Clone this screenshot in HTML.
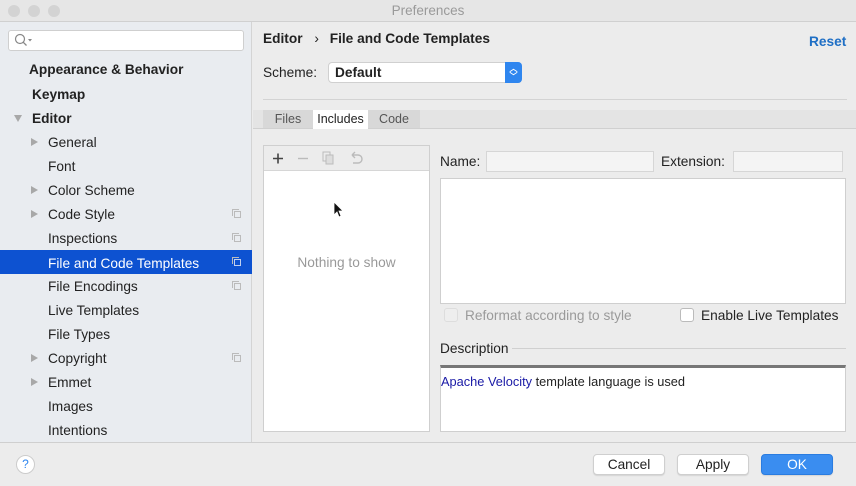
<!DOCTYPE html>
<html><head><style>
*{box-sizing:border-box;margin:0;padding:0}
body{width:856px;height:486px;overflow:hidden;font-family:"Liberation Sans",sans-serif;font-size:13.7px;color:#222;background:#ececec;position:relative}
.abs{position:absolute}
.tb{left:0;top:0;width:856px;height:22px;background:#e6e6e6;border-bottom:1px solid #d0d0d0;text-align:center;line-height:22px;color:#9a9a9a;font-size:13.5px}
.dot{top:5px;width:12px;height:12px;border-radius:6px;background:#d3d3d3}
.side{left:0;top:22px;width:252px;height:420px;background:#e9ecf0;border-right:1px solid #d4d4d4}
.row{position:absolute;left:0;width:252px;height:24px;line-height:25px}
.row span{position:absolute}
.arr{position:absolute;left:31px;top:8px;width:0;height:0;border-left:7px solid #a8a8a8;border-top:4px solid transparent;border-bottom:4px solid transparent}
.cp{position:absolute;left:234px;top:9px;width:7px;height:7px;border:1px solid #bbb;background:#e9ecf0}
.cp:before{content:"";position:absolute;left:-3px;top:-3px;width:6px;height:6px;border:1px solid #bbb;border-right:none;border-bottom:none}
.field{background:#f4f4f4;border:1px solid #d6d6d6}
.btn{top:454px;height:21px;width:72px;background:#fff;border:1px solid #cfcfcf;border-radius:4px;text-align:center;line-height:20px;font-size:13.7px;box-shadow:0 1px 1px rgba(0,0,0,.1)}
</style></head><body>
<div class="abs tb">Preferences</div>
<div class="abs dot" style="left:8px"></div><div class="abs dot" style="left:28px"></div><div class="abs dot" style="left:48px"></div>

<div class="abs side">
 <div class="abs" style="left:8px;top:8px;width:236px;height:21px;background:#fff;border:1px solid #cfcfcf;border-radius:3px">
  <svg width="22" height="19" style="position:absolute;left:3px;top:0"><circle cx="8" cy="8" r="4.5" fill="none" stroke="#888" stroke-width="1.2"/><line x1="11.2" y1="11.2" x2="14.5" y2="14.5" stroke="#888" stroke-width="1.3"/><path d="M16 8h4l-2 2.5z" fill="#888"/></svg>
 </div>
</div>
<div class="abs" style="left:0;top:22px;width:252px;height:420px">
 <div class="row" style="top:35px"><span style="left:29px;font-weight:bold">Appearance &amp; Behavior</span></div>
 <div class="row" style="top:60px"><span style="left:32px;font-weight:bold">Keymap</span></div>
 <div class="row" style="top:84px"><span style="left:14px;top:9px;width:0;height:0;border-top:7px solid #a8a8a8;border-left:4.5px solid transparent;border-right:4.5px solid transparent"></span><span style="left:32px;font-weight:bold">Editor</span></div>
 <div class="row" style="top:108px"><i class="arr"></i><span style="left:48px">General</span></div>
 <div class="row" style="top:132px"><span style="left:48px">Font</span></div>
 <div class="row" style="top:156px"><i class="arr"></i><span style="left:48px">Color Scheme</span></div>
 <div class="row" style="top:180px"><i class="arr"></i><span style="left:48px">Code Style</span><i class="cp"></i></div>
 <div class="row" style="top:204px"><span style="left:48px">Inspections</span><i class="cp"></i></div>
 <div class="row" style="top:228px;background:#0d52d1;color:#fff"><span style="left:48px;top:1px">File and Code Templates</span><i class="cp" style="background:#0d52d1;border-color:#c0d0f0"></i></div>
 <div class="row" style="top:252px"><span style="left:48px">File Encodings</span><i class="cp"></i></div>
 <div class="row" style="top:276px"><span style="left:48px">Live Templates</span></div>
 <div class="row" style="top:300px"><span style="left:48px">File Types</span></div>
 <div class="row" style="top:324px"><i class="arr"></i><span style="left:48px">Copyright</span><i class="cp"></i></div>
 <div class="row" style="top:348px"><i class="arr"></i><span style="left:48px">Emmet</span></div>
 <div class="row" style="top:372px"><span style="left:48px">Images</span></div>
 <div class="row" style="top:396px"><span style="left:48px">Intentions</span></div>
</div>

<div class="abs" style="left:263px;top:31px;font-weight:bold">Editor <span style="margin:0 7px 0 8px;font-weight:normal">›</span> File and Code Templates</div>
<div class="abs" style="left:809px;top:34px;color:#1f6fc5;font-weight:bold">Reset</div>
<div class="abs" style="left:263px;top:65px">Scheme:</div>
<div class="abs" style="left:328px;top:62px;width:194px;height:21px;background:#fff;border:1px solid #d0d0d0;border-radius:4px;font-weight:bold;line-height:20px;padding-left:6px">Default
 <div style="position:absolute;right:-1px;top:-1px;width:17px;height:21px;background:#2f86ef;border-radius:0 4px 4px 0;color:#fff;font-size:8px;line-height:8px;text-align:center;padding-top:3px">︿<br>﹀</div></div>
<div class="abs" style="left:263px;top:99px;width:584px;height:1px;background:#d3d3d3"></div>
<div class="abs" style="left:253px;top:110px;width:603px;height:19px;background:#e4e4e4;border-bottom:1px solid #d0d0d0"></div>
<div class="abs" style="left:263px;top:110px;width:50px;height:18px;background:#d8d8d8;text-align:center;line-height:19px;font-size:12.5px;color:#555">Files</div>
<div class="abs" style="left:313px;top:110px;width:55px;height:19px;background:#fff;text-align:center;line-height:19px;font-size:12.5px">Includes</div>
<div class="abs" style="left:368px;top:110px;width:52px;height:18px;background:#d8d8d8;text-align:center;line-height:19px;font-size:12.5px;color:#555">Code</div>

<div class="abs" style="left:263px;top:145px;width:167px;height:287px;background:#fff;border:1px solid #cfcfcf">
 <div style="height:25px;background:#ececec;border-bottom:1px solid #d6d6d6;position:relative">
  <svg width="110" height="25"><path d="M9 12.5h10M14 7.5v10" stroke="#444" stroke-width="1.6"/><path d="M34 12.5h10" stroke="#bbb" stroke-width="1.4"/><rect x="59" y="6" width="7" height="9" fill="none" stroke="#bbb"/><rect x="62" y="9" width="7" height="9" fill="#ddd" stroke="#bbb"/><path d="M88 9h6a4 4 0 0 1 0 8h-5M88 9l3-3M88 9l3 3" fill="none" stroke="#bbb" stroke-width="1.4"/></svg>
 </div>
 <div style="position:absolute;left:0;width:165px;top:109px;text-align:center;color:#999">Nothing to show</div>
 <svg style="position:absolute;left:69px;top:55px" width="12" height="18"><path d="M1 1v13l3-3 2 5 2-1-2-5h4z" fill="#111" stroke="#fff" stroke-width=".8"/></svg>
</div>

<div class="abs" style="left:440px;top:154px">Name:</div>
<div class="abs field" style="left:486px;top:151px;width:168px;height:21px"></div>
<div class="abs" style="left:661px;top:154px">Extension:</div>
<div class="abs field" style="left:733px;top:151px;width:110px;height:21px"></div>
<div class="abs" style="left:440px;top:178px;width:406px;height:126px;background:#fff;border:1px solid #cfcfcf"></div>
<div class="abs" style="left:444px;top:308px;width:14px;height:14px;border:1px solid #ddd;background:#eee;border-radius:3px"></div>
<div class="abs" style="left:465px;top:308px;color:#9a9a9a">Reformat according to style</div>
<div class="abs" style="left:680px;top:308px;width:14px;height:14px;border:1px solid #bbb;background:#fff;border-radius:3px"></div>
<div class="abs" style="left:701px;top:308px">Enable Live Templates</div>
<div class="abs" style="left:440px;top:341px">Description</div>
<div class="abs" style="left:512px;top:348px;width:334px;height:1px;background:#d0d0d0"></div>
<div class="abs" style="left:440px;top:365px;width:406px;height:67px;background:#fff;border:1px solid #cfcfcf;border-top:3px solid #777;font-size:12.8px;padding:6px 0 0 0"><span style="color:#1a1aa6">Apache Velocity</span> template language is used</div>

<div class="abs" style="left:0;top:442px;width:856px;height:1px;background:#cfcfcf"></div>
<div class="abs" style="left:16px;top:455px;width:19px;height:19px;border-radius:10px;background:#fff;border:1px solid #ccc;text-align:center;line-height:17px;color:#2f86ef;font-size:12px">?</div>
<div class="abs btn" style="left:593px">Cancel</div>
<div class="abs btn" style="left:677px">Apply</div>
<div class="abs btn" style="left:761px;background:#3a8df0;border-color:#2a7ce0;color:#fff">OK</div>
</body></html>
